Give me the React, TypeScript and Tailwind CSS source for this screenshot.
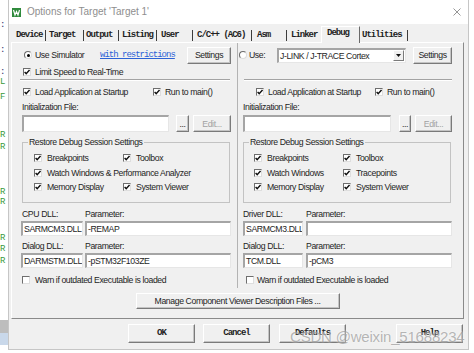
import React from "react";

const sans =
  "font-['Liberation_Sans',Arial,sans-serif] text-[8.7px] tracking-[-0.4px] leading-[12px] text-[#1e1e1e]";
const mono =
  "font-['Liberation_Mono','Courier_New',monospace] font-bold text-[9px] tracking-[-1px] leading-[11px] text-[#1e1e1e]";

const tabs = [
  { label: "Device", cls: "w-[32px] pl-[2px] border-r" },
  { label: "Target", cls: "w-[38px] pl-[3px] border-r" },
  { label: "Output", cls: "w-[35px] pl-[2px] border-r" },
  { label: "Listing", cls: "w-[38px] pl-[3px] border-r" },
  { label: "User", cls: "w-[36px] pl-[4px] border-r" },
  { label: "C/C++ (AC6)", cls: "w-[59px] pl-[4px] border-r" },
  { label: "Asm", cls: "w-[35px] pl-[5px] border-r" },
  { label: "Linker", cls: "w-[34px] pl-[4px]" },
  { label: "Debug", cls: "", active: true },
  { label: "Utilities", cls: "w-[48px] pl-[2px] border-r" },
];

function Check({ on = true }: { on?: boolean }) {
  return (
    <span className="flex h-[8px] w-[8px] shrink-0 items-center justify-center border border-t-[#6e6e6e] border-l-[#6e6e6e] border-r-[#dedede] border-b-[#dedede] bg-white">
      {on && (
        <svg viewBox="0 0 6 6" className="h-[6px] w-[6px]">
          <path d="M0.6 2.9 L2.2 4.6 L5.5 0.9" fill="none" stroke="#111" strokeWidth="1.4" />
        </svg>
      )}
    </span>
  );
}

function Radio({ on = false }: { on?: boolean }) {
  return (
    <span className="flex h-[8px] w-[8px] shrink-0 items-center justify-center rounded-full border border-t-[#6b6b6b] border-l-[#6b6b6b] border-r-[#dcdcdc] border-b-[#dcdcdc] bg-white">
      {on && <span className="h-[3px] w-[3px] rounded-full bg-black" />}
    </span>
  );
}

function Field({ className = "", children }: { className?: string; children?: React.ReactNode }) {
  return (
    <div
      className={`flex shrink-0 items-center overflow-hidden whitespace-nowrap border-l-2 border-t-2 border-l-[#a5a5a5] border-t-[#a5a5a5] border-r border-b border-r-[#e6e6e6] border-b-[#e6e6e6] bg-white pl-[1px] ${className}`}
    >
      {children}
    </div>
  );
}

function Btn({ className = "", children }: { className?: string; children: React.ReactNode }) {
  return (
    <div
      className={`flex shrink-0 items-center justify-center border border-t-white border-l-white border-r-[#7a7a7a] border-b-[#7a7a7a] bg-[#f0f0f0] shadow-[inset_-1px_-1px_0_#c4c4c4] ${className}`}
    >
      {children}
    </div>
  );
}

function Item({ label, className = "" }: { label: string; className?: string }) {
  return (
    <>
      <Check />
      <span className={`ml-[4px] whitespace-nowrap ${className}`}>{label}</span>
    </>
  );
}

function Group({ className, cb, rows }: { className: string; cb: string; rows: string[][] }) {
  const tops = ["mt-[4px]", "mt-[3px]", "mt-[2px]"];
  return (
    <div className={`flex h-[61px] w-[208px] shrink-0 flex-col border border-[#c3c3c3] ${className}`}>
      <span className="-mt-[7px] ml-[5px] h-[12px] w-fit bg-[#f0f0f0] px-[1px]">
        Restore Debug Session Settings
      </span>
      {rows.map((r, i) => (
        <div key={i} className={`flex h-[12px] items-center ${tops[i]}`}>
          <span className={cb}>
            <Check />
          </span>
          <span className="ml-[5px] w-[76px] whitespace-nowrap">{r[0]}</span>
          {r[1] && (
            <>
              <Check />
              <span className="ml-[5px] whitespace-nowrap">{r[1]}</span>
            </>
          )}
        </div>
      ))}
    </div>
  );
}

function Strip() {
  return (
    <div className="flex w-[8px] shrink-0 flex-col overflow-hidden bg-white font-['Liberation_Mono',monospace] text-[9px] leading-[10px]">
      <span className="mt-[20px] h-[10px] text-[#1f2f6b]">:</span>
      <span className="mt-[15px] h-[10px] text-[#1f2f6b]">:</span>
      <span className="mt-[12px] h-[10px] text-[#1f2f6b]">:</span>
      <span className="h-[10px] text-[#3a9a3a]">L</span>
      <span className="mt-[5px] h-[10px] text-[#3a9a3a]">F</span>
      <span className="mt-[28px] h-[10px] text-[#3a9a3a]">R</span>
      <span className="mt-[2px] h-[10px] text-[#3a9a3a]">R</span>
      <span className="mt-[35px] h-[10px] text-[#3a9a3a]">R</span>
      <span className="h-[10px] text-[#3a9a3a]">R</span>
      <span className="mt-[26px] h-[10px] text-[#3a9a3a]">R</span>
      <span className="mt-[1px] h-[10px] text-[#3a9a3a]">R</span>
      <span className="mt-[2px] h-[10px] text-[#3a9a3a]">R</span>
      <span className="mt-[54px] h-[13px] shrink-0 bg-[#bdbdbd]" />
      <span className="h-[12px] shrink-0 bg-[#c9d8ea]" />
    </div>
  );
}

export default function App() {
  return (
    <div className={`relative flex h-[353px] w-[474px] overflow-hidden bg-white ${sans}`}>
      <Strip />

      <div className="flex h-[350px] w-[461px] shrink-0 flex-col border-x border-b border-[#c6c6c6] bg-[#f0f0f0]">
        {/* title bar */}
        <div className="flex h-[24px] shrink-0 items-center bg-white">
          <svg viewBox="0 0 9 9" className="ml-[3px] h-[9px] w-[9px]">
            <rect x="0" y="0" width="9" height="9" fill="#2f8a3c" />
            <path d="M1.5 2 L3 7 L4.5 3.5 L6 7 L7.5 2" fill="none" stroke="#fff" strokeWidth="1.2" />
          </svg>
          <span className="ml-[6px] font-['Liberation_Sans',Arial,sans-serif] text-[10px] tracking-normal text-[#8e8e8e]">
            Options for Target 'Target 1'
          </span>
          <svg viewBox="0 0 8 8" className="ml-auto mr-[7px] h-[8px] w-[8px]">
            <path d="M0.5 0.5 L7.5 7.5 M7.5 0.5 L0.5 7.5" stroke="#8a8a8a" strokeWidth="0.9" />
          </svg>
        </div>

        {/* tabs */}
        <div className={`ml-[5px] mt-[4px] flex h-[14px] shrink-0 items-start ${mono}`}>
          {tabs.map((t) =>
            t.active ? (
              <div
                key={t.label}
                className="relative z-10 -mt-[2px] h-[17px] w-[39px] border-l border-t border-r border-l-white border-t-white border-r-[#6a6a6a] bg-[#f0f0f0] pl-[5px] pt-[1px]"
              >
                {t.label}
              </div>
            ) : (
              <div key={t.label} className={`mt-[2px] h-[11px] whitespace-nowrap border-[#3c3c3c] ${t.cls}`}>
                {t.label}
              </div>
            )
          )}
        </div>

        {/* tab panel */}
        <div className="ml-[2px] flex h-[277px] w-[453px] shrink-0 flex-col border border-t-white border-l-white border-r-[#8a8a8a] border-b-[#8a8a8a]">
          <div className="flex h-[245px] shrink-0">
            {/* left column */}
            <div className="flex w-[226px] shrink-0 flex-col border-r border-[#b3b3b3]">
              <div className="mt-[3px] flex h-[18px] items-center">
                <span className="ml-[12px]">
                  <Radio on />
                </span>
                <span className="ml-[3px] w-[65px]">Use Simulator</span>
                <span className="w-[87px] font-['Liberation_Mono','Courier_New',monospace] text-[9px] tracking-[-1px] text-[#2c62d6] underline">
                  with restrictions
                </span>
                <Btn className="h-[17px] w-[44px]">Settings</Btn>
              </div>
              <div className="mt-[2px] flex h-[12px] items-center pl-[11px]">
                <Item label="Limit Speed to Real-Time" />
              </div>
              <div className="ml-[8px] mt-[1px] h-[2px] w-[210px] border-t border-b border-t-[#a3a3a3] border-b-white" />
              <div className="mt-[5px] flex h-[12px] items-center pl-[11px]">
                <Item label="Load Application at Startup" className="w-[118px]" />
                <Item label="Run to main()" />
              </div>
              <div className="ml-[10px] mt-[3px] h-[12px]">Initialization File:</div>
              <div className="ml-[10px] mt-[2px] flex h-[17px]">
                <Field className="h-[17px] w-[147px]" />
                <Btn className="ml-[7px] h-[17px] w-[13px]">...</Btn>
                <Btn className="ml-[4px] h-[17px] w-[38px] text-[#a2a2a2]">Edit...</Btn>
              </div>
              <Group
                className="ml-[10px] mt-[10px]"
                cb="ml-[11px]"
                rows={[
                  ["Breakpoints", "Toolbox"],
                  ["Watch Windows & Performance Analyzer", ""],
                  ["Memory Display", "System Viewer"],
                ]}
              />
              <div className="ml-[10px] mt-[5px] flex h-[12px]">
                <span className="w-[63px]">CPU DLL:</span>
                <span>Parameter:</span>
              </div>
              <div className="ml-[9px] mt-[1px] flex">
                <Field className="h-[15px] w-[62px]">SARMCM3.DLL</Field>
                <Field className="ml-[2px] h-[15px] w-[146px]">-REMAP</Field>
              </div>
              <div className="ml-[10px] mt-[4px] flex h-[12px]">
                <span className="w-[63px]">Dialog DLL:</span>
                <span>Parameter:</span>
              </div>
              <div className="ml-[9px] mt-[1px] flex">
                <Field className="h-[15px] w-[62px]">DARMSTM.DLL</Field>
                <Field className="ml-[2px] h-[15px] w-[146px]">-pSTM32F103ZE</Field>
              </div>
              <div className="mt-[6px] flex h-[12px] items-center pl-[10px]">
                <Check on={false} />
                <span className="ml-[5px]">Warn if outdated Executable is loaded</span>
              </div>
            </div>

            {/* right column */}
            <div className="flex w-[225px] shrink-0 flex-col">
              <div className="mt-[3px] flex h-[18px] items-center">
                <span className="ml-[1px]">
                  <Radio />
                </span>
                <span className="ml-[2px] w-[28px]">Use:</span>
                <Field className="h-[15px] w-[129px]">
                  <span className="flex-1">J-LINK / J-TRACE Cortex</span>
                  <span className="mr-[1px] flex h-[11px] w-[11px] items-center justify-center border border-t-white border-l-white border-r-[#7a7a7a] border-b-[#7a7a7a] bg-[#f0f0f0]">
                    <svg viewBox="0 0 5 3" className="h-[3px] w-[5px]">
                      <path d="M0 0 H5 L2.5 3 Z" fill="#111" />
                    </svg>
                  </span>
                </Field>
                <Btn className="ml-[7px] h-[17px] w-[39px]">Settings</Btn>
              </div>
              <div className="mt-[2px] h-[12px]" />
              <div className="ml-[6px] mt-[1px] h-[2px] w-[208px] border-t border-b border-t-[#a3a3a3] border-b-white" />
              <div className="mt-[5px] flex h-[12px] items-center pl-[18px]">
                <Item label="Load Application at Startup" className="w-[107px]" />
                <Item label="Run to main()" />
              </div>
              <div className="ml-[5px] mt-[3px] h-[12px]">Initialization File:</div>
              <div className="ml-[5px] mt-[2px] flex h-[17px]">
                <Field className="h-[17px] w-[148px]" />
                <Btn className="ml-[8px] h-[17px] w-[12px]">...</Btn>
                <Btn className="ml-[4px] h-[17px] w-[37px] text-[#a2a2a2]">Edit...</Btn>
              </div>
              <Group
                className="ml-[5px] mt-[10px]"
                cb="ml-[10px]"
                rows={[
                  ["Breakpoints", "Toolbox"],
                  ["Watch Windows", "Tracepoints"],
                  ["Memory Display", "System Viewer"],
                ]}
              />
              <div className="ml-[5px] mt-[5px] flex h-[12px]">
                <span className="w-[63px]">Driver DLL:</span>
                <span>Parameter:</span>
              </div>
              <div className="ml-[5px] mt-[1px] flex">
                <Field className="h-[15px] w-[60px]">SARMCM3.DLL</Field>
                <Field className="ml-[3px] h-[15px] w-[146px]" />
              </div>
              <div className="ml-[5px] mt-[4px] flex h-[12px]">
                <span className="w-[63px]">Dialog DLL:</span>
                <span>Parameter:</span>
              </div>
              <div className="ml-[5px] mt-[1px] flex">
                <Field className="h-[15px] w-[60px]">TCM.DLL</Field>
                <Field className="ml-[3px] h-[15px] w-[146px]">-pCM3</Field>
              </div>
              <div className="mt-[6px] flex h-[12px] items-center pl-[8px]">
                <Check on={false} />
                <span className="ml-[3px]">Warn if outdated Executable is loaded</span>
              </div>
            </div>
          </div>

          <Btn className="mt-[5px] h-[16px] w-[204px] self-center">
            Manage Component Viewer Description Files ...
          </Btn>
        </div>

        {/* dialog buttons */}
        <div className={`mt-[5px] flex h-[19px] shrink-0 ${mono}`}>
          <Btn className="ml-[119px] h-[19px] w-[67px]">OK</Btn>
          <Btn className="ml-[8px] h-[19px] w-[67px]">Cancel</Btn>
          <Btn className="ml-[9px] h-[19px] w-[67px]">Defaults</Btn>
          <Btn className="ml-[50px] h-[19px] w-[67px]">Help</Btn>
        </div>
      </div>

      <div className="pointer-events-none absolute left-[290px] top-[327px] font-['Liberation_Sans',Arial,sans-serif] text-[15px] leading-[20px] tracking-[-0.2px] text-[rgba(135,135,135,0.6)] [text-shadow:0_0_2px_rgba(255,255,255,0.9)]">
        CSDN @weixin_51688234
      </div>
    </div>
  );
}
